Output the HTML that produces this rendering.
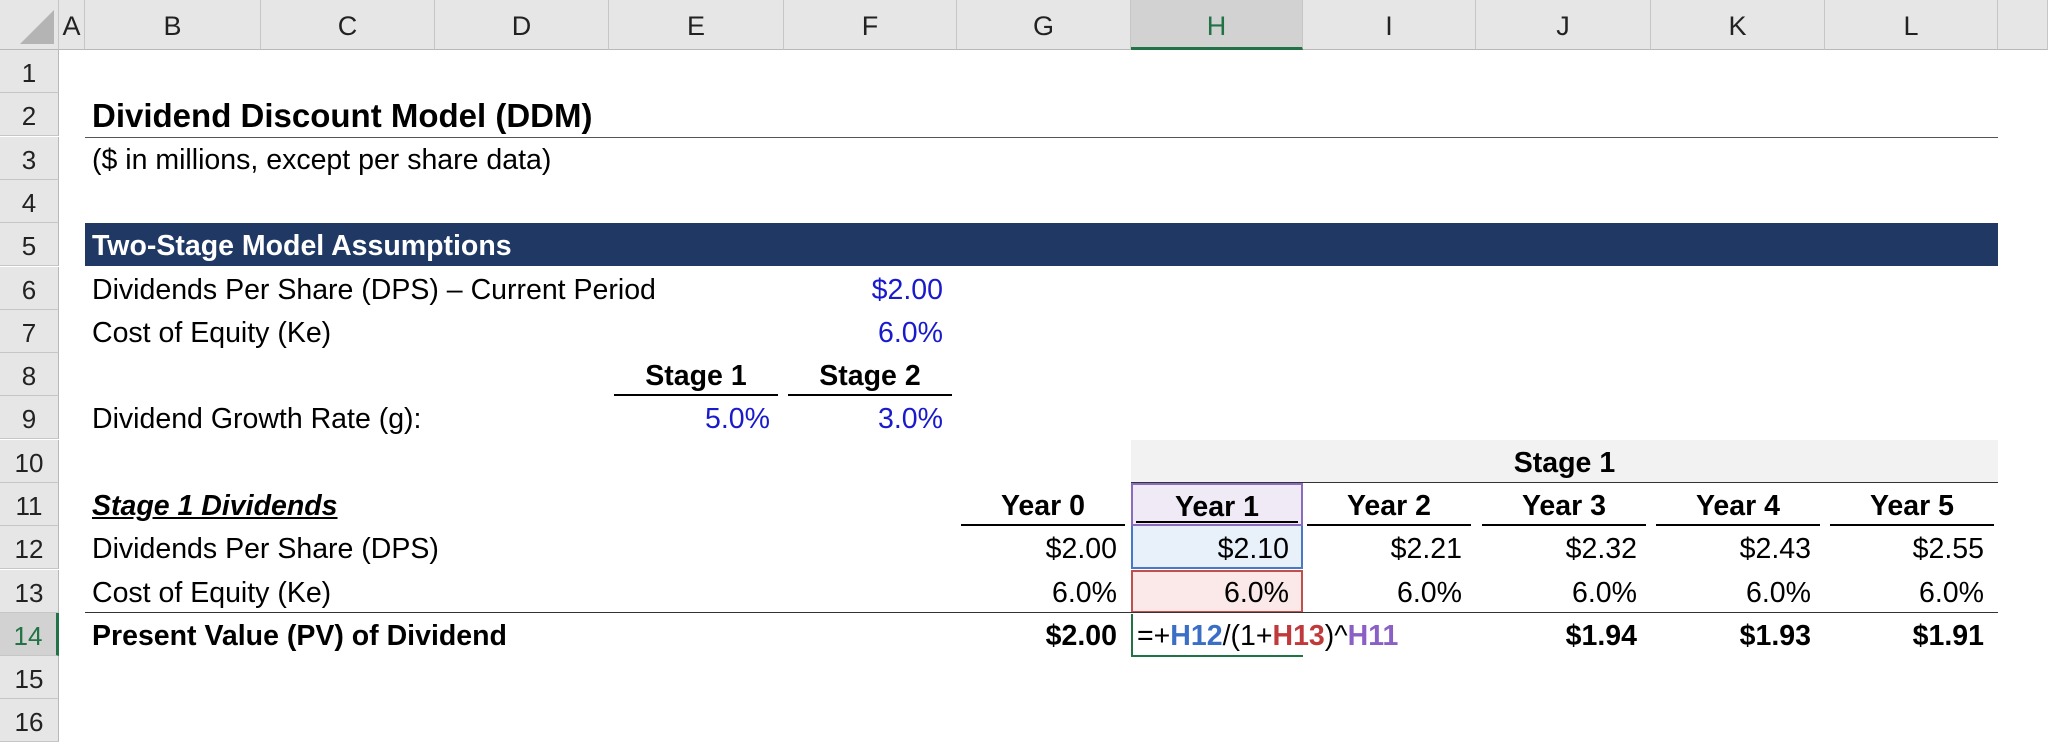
<!DOCTYPE html>
<html><head><meta charset="utf-8"><style>
*{margin:0;padding:0;box-sizing:border-box}
body{width:2048px;height:702px;overflow:hidden;background:#fff;font-family:"Liberation Sans",Arial,sans-serif;position:relative;color:#000}
.a{position:absolute;white-space:nowrap}
.h{top:0;height:50px;line-height:52px;text-align:center;font-size:27px;color:#222;border-right:1px solid #c6c6c6;background:#e6e6e6;border-bottom:1px solid #b8b8b8}
.rn{left:0;width:59px;height:43px;line-height:46px;text-align:center;font-size:26px;background:#e6e6e6;border-bottom:1px solid #c6c6c6;border-right:1px solid #b8b8b8;color:#222}
.c{height:43px;line-height:46px;font-size:28.5px;padding:0 14px 0 7px}
.r{text-align:right}
.ce{text-align:center;padding:0}
.b{font-weight:bold}
.bl{color:#1a1acd}
</style></head><body>
<div class="a h" style="left:0;width:59px"></div>
<div class="a" style="left:20px;top:10px;width:0;height:0;border-left:34px solid transparent;border-bottom:34px solid #b4b4b4"></div>
<div class="a h" style="left:59px;width:26px">A</div>
<div class="a h" style="left:85px;width:176px">B</div>
<div class="a h" style="left:261px;width:174px">C</div>
<div class="a h" style="left:435px;width:174px">D</div>
<div class="a h" style="left:609px;width:175px">E</div>
<div class="a h" style="left:784px;width:173px">F</div>
<div class="a h" style="left:957px;width:174px">G</div>
<div class="a h" style="left:1131px;width:172px;background:#d2d2d2;color:#217346;border-bottom:3px solid #217346">H</div>
<div class="a h" style="left:1303px;width:173px">I</div>
<div class="a h" style="left:1476px;width:175px">J</div>
<div class="a h" style="left:1651px;width:174px">K</div>
<div class="a h" style="left:1825px;width:173px">L</div>
<div class="a h" style="left:1998px;width:50px"></div>
<div class="a rn" style="top:50px">1</div>
<div class="a rn" style="top:93px">2</div>
<div class="a rn" style="top:137px">3</div>
<div class="a rn" style="top:180px">4</div>
<div class="a rn" style="top:223px">5</div>
<div class="a rn" style="top:267px">6</div>
<div class="a rn" style="top:310px">7</div>
<div class="a rn" style="top:353px">8</div>
<div class="a rn" style="top:396px">9</div>
<div class="a rn" style="top:440px">10</div>
<div class="a rn" style="top:483px">11</div>
<div class="a rn" style="top:526px">12</div>
<div class="a rn" style="top:570px">13</div>
<div class="a rn" style="top:613px;background:#d2d2d2;color:#217346;border-right:3px solid #217346">14</div>
<div class="a rn" style="top:656px">15</div>
<div class="a rn" style="top:699px">16</div>

<div class="a c b" style="left:85px;top:93px;font-size:33px">Dividend Discount Model (DDM)</div>
<div class="a" style="left:85px;top:137px;width:1913px;height:1px;background:#555"></div>
<div class="a c" style="left:85px;top:137px">($ in millions, except per share data)</div>
<div class="a c b" style="left:85px;top:223px;width:1913px;background:#1f3864;color:#fff">Two-Stage Model Assumptions</div>
<div class="a c" style="left:85px;top:267px">Dividends Per Share (DPS) – Current Period</div>
<div class="a c r bl" style="left:784px;top:267px;width:173px">$2.00</div>
<div class="a c" style="left:85px;top:310px">Cost of Equity (Ke)</div>
<div class="a c r bl" style="left:784px;top:310px;width:173px">6.0%</div>
<div class="a c b ce" style="left:614px;top:353px;width:164px;border-bottom:2px solid #000">Stage 1</div>
<div class="a c b ce" style="left:788px;top:353px;width:164px;border-bottom:2px solid #000">Stage 2</div>
<div class="a c" style="left:85px;top:396px">Dividend Growth Rate (g):</div>
<div class="a c r bl" style="left:609px;top:396px;width:175px">5.0%</div>
<div class="a c r bl" style="left:784px;top:396px;width:173px">3.0%</div>
<div class="a c b ce" style="left:1131px;top:440px;width:867px;background:#f2f2f2;border-bottom:1px solid #333">Stage 1</div>
<div class="a c b" style="left:85px;top:483px;font-style:italic;text-decoration:underline">Stage 1 Dividends</div>
<div class="a c b ce" style="left:961px;top:483px;width:164px;border-bottom:2px solid #000">Year 0</div>
<div class="a c b ce" style="left:1131px;top:483px;width:172px;background:#efeaf6;border:2px solid #8a6cbf;line-height:44px">Year 1</div>
<div class="a" style="left:1136px;top:521px;width:162px;height:2px;background:#000"></div>
<div class="a c b ce" style="left:1307px;top:483px;width:164px;border-bottom:2px solid #000">Year 2</div>
<div class="a c b ce" style="left:1482px;top:483px;width:164px;border-bottom:2px solid #000">Year 3</div>
<div class="a c b ce" style="left:1656px;top:483px;width:164px;border-bottom:2px solid #000">Year 4</div>
<div class="a c b ce" style="left:1830px;top:483px;width:164px;border-bottom:2px solid #000">Year 5</div>
<div class="a c" style="left:85px;top:526px">Dividends Per Share (DPS)</div>
<div class="a c r" style="left:957px;top:526px;width:174px">$2.00</div>
<div class="a c r" style="left:1131px;top:526px;width:172px;background:#e8f0fa;border:2px solid #4a78c8;border-top:none;padding-right:12px">$2.10</div>
<div class="a c r" style="left:1303px;top:526px;width:173px">$2.21</div>
<div class="a c r" style="left:1476px;top:526px;width:175px">$2.32</div>
<div class="a c r" style="left:1651px;top:526px;width:174px">$2.43</div>
<div class="a c r" style="left:1825px;top:526px;width:173px">$2.55</div>
<div class="a c" style="left:85px;top:570px">Cost of Equity (Ke)</div>
<div class="a c r" style="left:957px;top:570px;width:174px">6.0%</div>
<div class="a c r" style="left:1131px;top:570px;width:172px;background:#fbe9e9;border:2px solid #c0504d;line-height:42px;padding-right:12px">6.0%</div>
<div class="a c r" style="left:1303px;top:570px;width:173px">6.0%</div>
<div class="a c r" style="left:1476px;top:570px;width:175px">6.0%</div>
<div class="a c r" style="left:1651px;top:570px;width:174px">6.0%</div>
<div class="a c r" style="left:1825px;top:570px;width:173px">6.0%</div>
<div class="a" style="left:85px;top:612px;width:1913px;height:1px;background:#333"></div>
<div class="a c b" style="left:85px;top:613px">Present Value (PV) of Dividend</div>
<div class="a c r b" style="left:957px;top:613px;width:174px">$2.00</div>
<div class="a" style="left:1131px;top:614px;width:172px;height:43px;border-left:2px solid #217346;border-bottom:2px solid #217346"></div>
<div class="a c" style="left:1131px;top:613px;padding-left:6px">=+<span style="color:#3b6fc6;font-weight:bold">H12</span>/(1+<span style="color:#c0393b;font-weight:bold">H13</span>)^<span style="color:#8a60c6;font-weight:bold">H11</span></div>
<div class="a c r b" style="left:1476px;top:613px;width:175px">$1.94</div>
<div class="a c r b" style="left:1651px;top:613px;width:174px">$1.93</div>
<div class="a c r b" style="left:1825px;top:613px;width:173px">$1.91</div>
</body></html>
